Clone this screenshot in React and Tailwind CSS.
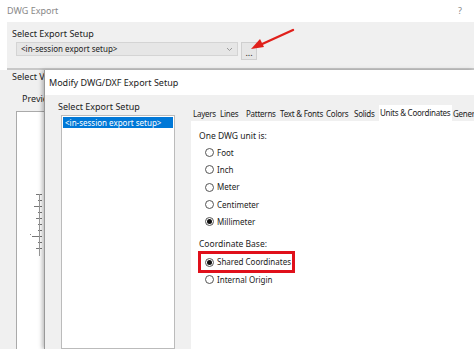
import React from 'react';

const UNITS = [
  { label: 'Foot', checked: false },
  { label: 'Inch', checked: false },
  { label: 'Meter', checked: false },
  { label: 'Centimeter', checked: false },
  { label: 'Millimeter', checked: true },
];

// tab widths measured off the dialog
const TABS = [
  { label: 'Layers', w: 'w-[27px]' },
  { label: 'Lines', w: 'w-[26px]' },
  { label: 'Patterns', w: 'w-[34px]' },
  { label: 'Text & Fonts', w: 'w-[46px]' },
  { label: 'Colors', w: 'w-[28px]' },
  { label: 'Solids', w: 'w-[26px]' },
  { label: 'Units & Coordinates', w: 'w-[73px]', active: true },
  { label: 'General', w: 'w-[40px]' },
];

function Radio({ checked }) {
  return (
    <span className="w-[9px] h-[9px] rounded-full border border-[#555] bg-white flex items-center justify-center shrink-0">
      {checked && <span className="w-[5px] h-[5px] rounded-full bg-[#111]" />}
    </span>
  );
}

function RadioRow({ label, checked, h = 'h-[17.3px]' }) {
  return (
    <div className={`flex items-center gap-[3px] ${h} pl-[6px] whitespace-nowrap text-[8px]`}>
      <Radio checked={checked} />
      <span>{label}</span>
    </div>
  );
}

export default function App() {
  return (
    <div
      className="relative w-[474px] h-[349px] overflow-hidden bg-white text-[9px] text-[#222]"
      style={{ fontFamily: '"Segoe UI", "Noto Sans", "Open Sans", sans-serif' }}
    >
      {/* parent window */}
      <div className="flex items-center justify-between h-[22px] pl-[7px] pr-[12px] text-[9px] text-[#888]">
        <span>DWG Export</span>
        <span>?</span>
      </div>

      <div className="ml-[7px] h-[48px] bg-[#f0f0f0] border-b-2 border-[#c8c8c8] pl-[5px] pt-[6px]">
        <div className="leading-[12px]">Select Export Setup</div>
        <div className="flex items-start gap-[3px] mt-[2px] ml-[4px]">
          <div className="w-[222px] h-[14px] bg-[#e6e6e6] border border-[#d4d4d4] flex items-center justify-between pl-[4px] pr-[4px] text-[8px]">
            <span>&lt;in-session export setup&gt;</span>
            <svg width="7" height="5" viewBox="0 0 7 5"><path d="M1 1l2.5 2.5L6 1" fill="none" stroke="#999" strokeWidth="1" /></svg>
          </div>
          <div className="w-[16px] h-[18px] bg-[#e6e6e6] border border-[#cfcfcf] flex items-end justify-center pb-[2px] leading-none text-[9px]">...</div>
        </div>
      </div>

      <div className="flex h-[279px] bg-[#f0f0f0]">
        <div className="w-[44px] flex flex-col whitespace-nowrap">
          <div className="pl-[12px] pt-[1px] leading-[12px]">Select Vi</div>
          <div className="pl-[22px] pt-[10px] leading-[12px]">Previe</div>
          <div className="ml-[16px] mt-[6px] flex-1 bg-white border-l border-t border-[#aaa] relative">
            <div className="absolute left-[13px] top-[122px] w-[1px] h-[1px] bg-[#888]" />
            <div className="absolute right-[2px] top-[82px] flex flex-col items-end gap-[5px]">
              {[6, 4, 8, 4, 6, 4, 4, 10, 4, 6].map((w, i) => (
                <div key={i} className="h-[1px] bg-[#777]" style={{ width: w }} />
              ))}
            </div>
            <div className="absolute right-[4px] top-[82px] w-[1px] h-[62px] bg-[#999]" />
          </div>
        </div>
      </div>

      {/* annotation arrow */}
      <svg className="absolute left-[248px] top-[26px]" width="50" height="26" viewBox="0 0 50 26">
        <path d="M45 4 L12 19" stroke="#e0201b" strokeWidth="2.4" strokeLinecap="round" />
        <path d="M3 23 L12 13 L16 21 Z" fill="#e0201b" />
      </svg>

      {/* modal dialog */}
      <div className="absolute left-[44px] top-[70px] right-0 bottom-0 flex flex-col border-l border-[#999] shadow-[-2px_0_4px_rgba(0,0,0,0.25)]">
        <div className="h-[25px] bg-white flex items-center pl-[4px] text-[9px] text-[#222]">
          Modify DWG/DXF Export Setup
        </div>
        <div className="flex flex-1 bg-[#f0f0f0] min-h-0">
          <div className="w-[146px] flex flex-col pl-[13px]">
            <div className="pt-[6px] leading-[12px]">Select Export Setup</div>
            <div className="ml-[3px] mt-[2px] w-[114px] flex-1 bg-white border border-[#bbb] p-[1px]">
              <div className="h-[11px] bg-[#0078d7] text-white flex items-center pl-[2px] whitespace-nowrap text-[8px]">&lt;in-session export setup&gt;</div>
            </div>
          </div>
          <div className="flex-1 flex flex-col min-w-0">
            <div className="flex items-end h-[26px] pl-[1px] whitespace-nowrap overflow-hidden text-[8px] tracking-[-0.25px]">
              {TABS.map((t) => (
                <div
                  key={t.label}
                  className={
                    t.active
                      ? `${t.w} shrink-0 pl-[1px] h-[16px] flex items-center bg-white`
                      : `${t.w} shrink-0 pl-[1px] h-[14px] flex items-center`
                  }
                >
                  {t.label}
                </div>
              ))}
            </div>
            <div className="flex-1 bg-white pl-[8px] pt-[8px] whitespace-nowrap">
              <div className="h-[15px] flex items-center text-[8.5px]">One DWG unit is:</div>
              {UNITS.map((u) => (
                <RadioRow key={u.label} label={u.label} checked={u.checked} />
              ))}
              <div className="h-[15px] flex items-center mt-[6px] text-[8.5px]">Coordinate Base:</div>
              <div className="w-[97px] h-[22px] border-[3px] border-[#e0101b] flex items-center -ml-[1px]">
                <div className="flex items-center gap-[3px] pl-[4px] text-[8px]">
                  <Radio checked />
                  <span>Shared Coordinates</span>
                </div>
              </div>
              <RadioRow label="Internal Origin" checked={false} h="h-[13px]" />
            </div>
          </div>
        </div>
      </div>
    </div>
  );
}
